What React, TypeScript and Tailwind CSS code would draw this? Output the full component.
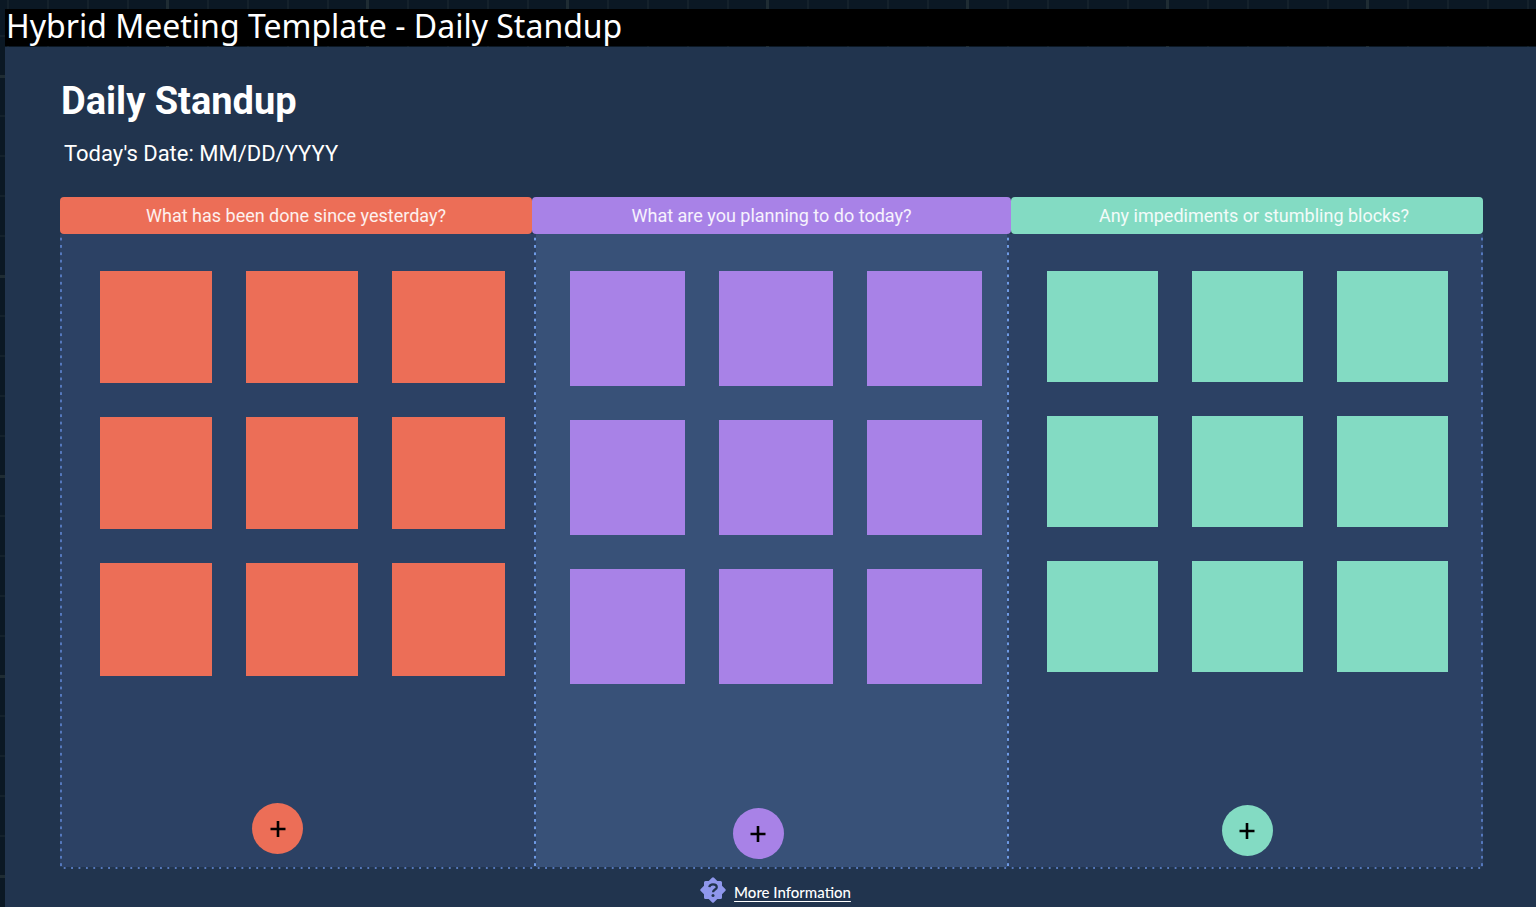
import React from "react";
import { clsx } from "clsx";

// one lane of the standup board
interface LaneData {
  id: string;
  title: string;
  color: string;
  titleStyle: string;
  laneStyle: string;
  gridStyle: string;
  buttonStyle: string;
}

interface LaneProps {
  lane: LaneData;
}

const NOTES = [1, 2, 3, 4, 5, 6, 7, 8, 9];

const lanes: LaneData[] = [
  {
    id: "done",
    title: "What has been done since yesterday?",
    color: "bg-[#ec6e57]",
    titleStyle: "pr-0",
    laneStyle: "bg-[#2c4164]",
    gridStyle: "pl-[38px] pr-[29px]",
    buttonStyle: "pr-10 pb-[13px]",
  },
  {
    id: "today",
    title: "What are you planning to do today?",
    color: "bg-[#a882e7]",
    titleStyle: "pr-0",
    laneStyle: "bg-[#385178]",
    gridStyle: "pl-[34px] pr-[25px]",
    buttonStyle: "pr-[26px] pb-2",
  },
  {
    id: "blocks",
    title: "Any impediments or stumbling blocks?",
    color: "bg-[#83dbc3]",
    titleStyle: "pl-[14px]",
    laneStyle: "bg-[#2c4164]",
    gridStyle: "pl-[38px] pr-[33px]",
    buttonStyle: "pl-1 pb-[11px]",
  },
];

const Lane: React.FC<LaneProps> = ({ lane }) => {
  return (
    <section
      aria-label={lane.title}
      className={clsx("flex flex-col pt-[37px]", lane.laneStyle)}
    >
      <ul className={clsx("grid grid-cols-3 gap-[34px]", lane.gridStyle)}>
        {NOTES.map((note) => (
          <li key={note} className={clsx("aspect-square", lane.color)} />
        ))}
      </ul>

      <div className={clsx("mt-auto flex justify-center pt-8", lane.buttonStyle)}>
        <button
          type="button"
          aria-label="Add note"
          className={clsx(
            "flex size-[51px] cursor-pointer items-center justify-center rounded-full text-black",
            lane.color
          )}
        >
          <svg viewBox="0 0 16 16" className="size-4" stroke="currentColor" strokeWidth="2.6">
            <path d="M8 0v16M0.5 8h15" />
          </svg>
        </button>
      </div>
    </section>
  );
};

// vertical dotted rule between two lanes
const Dots: React.FC<{ bright?: boolean }> = ({ bright }) => (
  <div
    className={clsx(
      "bg-[#2c4164] bg-[length:2px_calc(100%/86)]",
      bright
        ? "bg-[linear-gradient(to_bottom,transparent_4px,#6f9be6_4px,#6f9be6_6px,transparent_6px)]"
        : "bg-[linear-gradient(to_bottom,transparent_4px,#5578bd_4px,#5578bd_6px,transparent_6px)]"
    )}
  />
);

// eight-pointed badge: a square and a diamond with softened corners
const HelpBadge: React.FC = () => (
  <svg viewBox="0 0 26 26" className="size-[26px]" aria-hidden="true">
    <g fill="#8f97ec" stroke="#8f97ec" strokeWidth="3" strokeLinejoin="round">
      <path d="M5.500 5.500H20.500V20.500H5.500Z" />
      <path d="M13 1.800L24.200 13L13 24.200L1.800 13Z" />
    </g>
    <path
      d="M9.300 10.200C9.600 8.200 11 7.400 13 7.400C15.200 7.400 16.800 8.400 16.800 10.200C16.800 12.500 13 12.600 13 15.200"
      fill="none"
      stroke="#21344e"
      strokeWidth="2.200"
    />
    <circle cx="13" cy="18.400" r="1.500" fill="#21344e" />
  </svg>
);

export default function App() {
  return (
    <div className="flex min-h-screen flex-col bg-[#0b1824] bg-[linear-gradient(to_right,#1f2c33_3px,transparent_3px),linear-gradient(to_bottom,#1f2c33_3px,transparent_3px),linear-gradient(to_right,#14212b_2px,transparent_2px),linear-gradient(to_bottom,#14212b_2px,transparent_2px)] bg-[length:200px_200px,200px_200px,40px_40px,40px_40px] bg-[position:166px_0,0_75px,7px_0,0_35px] pt-[9px] pl-[5px] font-['Roboto','Liberation_Sans',sans-serif] text-white">
      <header className="mb-px bg-black pb-[3px] pl-px">
        <h1 className="font-['Noto_Sans','Open_Sans',sans-serif] text-[32px] leading-[34px]">
          Hybrid Meeting Template - Daily Standup
        </h1>
      </header>

      <main className="flex flex-1 flex-col bg-[#21344e] pr-[53px] pl-[55px]">
        <h2 className="pt-8 pl-px text-[38px] leading-[44px] font-bold">Daily Standup</h2>
        <p className="mt-4 pl-1 text-[22px] leading-[30px]">Today's Date: MM/DD/YYYY</p>

        <div className="mt-7 grid grid-cols-[472fr_479fr_472fr]">
          {lanes.map((lane) => (
            <h3
              key={lane.id}
              className={clsx(
                "rounded-[4px] text-center text-[18px] leading-[37px] text-white/90",
                lane.color,
                lane.titleStyle
              )}
            >
              {lane.title}
            </h3>
          ))}
        </div>

        <div className="grid flex-1 grid-cols-[2px_1fr_2px_1fr_2px_1fr_2px]">
          <Dots />
          <Lane lane={lanes[0]} />
          <Dots bright />
          <Lane lane={lanes[1]} />
          <Dots bright />
          <Lane lane={lanes[2]} />
          <Dots />
        </div>
        <div className="h-[2px] bg-[linear-gradient(to_right,transparent_4px,#5578bd_4px,#5578bd_6px,transparent_6px)] bg-[length:calc(100%/192)_2px]" />

        <footer className="flex h-[38px] items-center justify-center gap-2 pt-1 pl-2">
          <HelpBadge />
          <a
            href="#"
            className="pt-1 font-['Lato','Open_Sans',sans-serif] text-[15px] leading-5 font-medium underline underline-offset-3"
          >
            More Information
          </a>
        </footer>
      </main>
    </div>
  );
}
